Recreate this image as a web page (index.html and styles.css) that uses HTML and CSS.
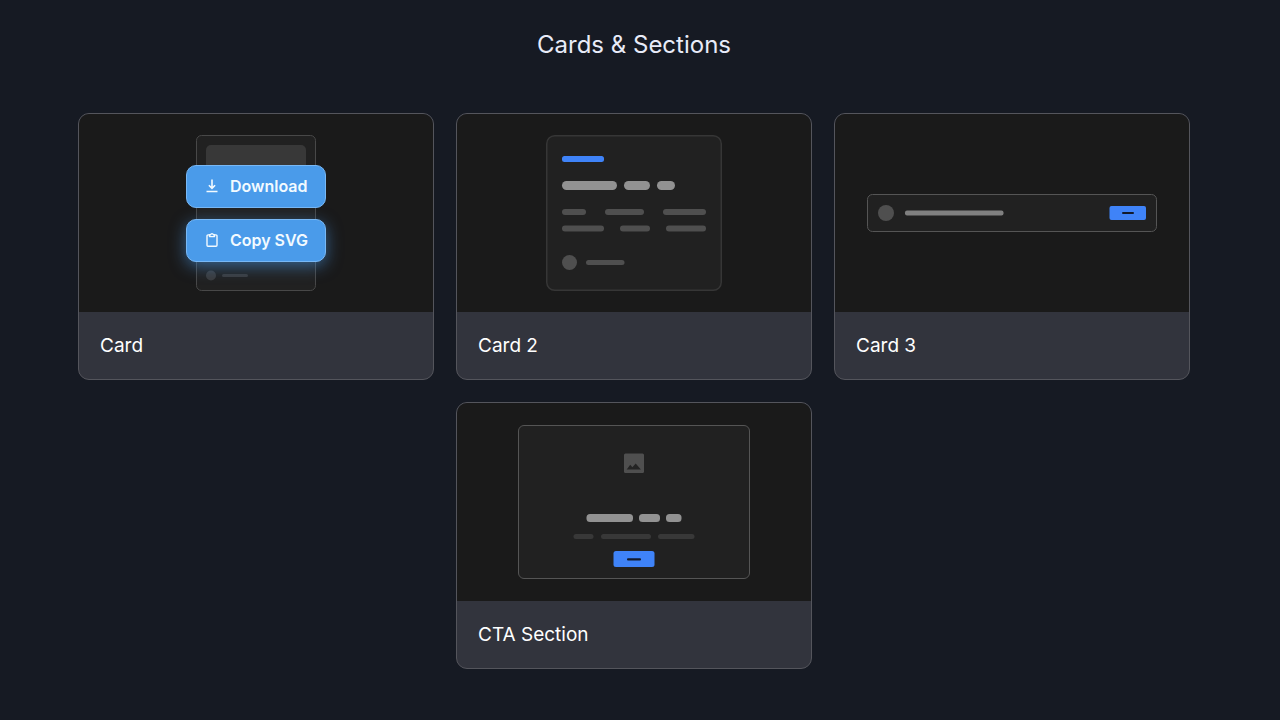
FILE: index.html
```html
<!DOCTYPE html>
<html lang="en">
<head>
<meta charset="utf-8">
<meta name="viewport" content="width=device-width, initial-scale=1">
<title>Cards &amp; Sections</title>
<link rel="stylesheet" href="styles.css">
</head>
<body>
<main class="page">
  <h1 class="heading">Cards &amp; Sections</h1>
  <div class="cards">
    <article class="card">
      <div class="preview">
        <svg class="thumb" width="120" height="156" viewBox="0 0 120 156" aria-hidden="true">
          <rect class="frame frame-light" x=".5" y=".5" width="119" height="155" rx="5"/>
          <rect class="picture" x="10" y="10" width="100" height="60" rx="5"/>
          <circle class="faint" cx="15" cy="140.5" r="5"/>
          <rect class="faint" x="26" y="139" width="26" height="3" rx="1.5"/>
        </svg>
        <div class="actions">
          <button class="action" type="button">
            <svg width="16" height="16" viewBox="0 0 16 16" fill="none" stroke="currentColor" stroke-width="1.6" aria-hidden="true"><path d="M8 1.5v8.5M4.900 7.300 8 10.400l3.100-3.100M2.500 13.500h11"/></svg>
            Download
          </button>
          <button class="action action-glow" type="button">
            <svg width="16" height="16" viewBox="0 0 16 16" fill="none" stroke="currentColor" stroke-width="1.4" stroke-linejoin="round" aria-hidden="true"><path d="M5.500 2.900H4a1 1 0 0 0-1 1v9.300a1 1 0 0 0 1 1h8a1 1 0 0 0 1-1V3.900a1 1 0 0 0-1-1h-1.500"/><path d="M5.500 4.600V2.700h1.100a1.450 1.450 0 0 1 2.800 0h1.100v1.900z"/></svg>
            Copy SVG
          </button>
        </div>
      </div>
      <h2 class="title">Card</h2>
    </article>

    <article class="card">
      <div class="preview">
        <svg class="thumb" width="176" height="156" viewBox="0 0 176 156" aria-hidden="true">
          <rect class="frame frame-dim" x=".75" y=".75" width="174.5" height="154.5" rx="8"/>
          <rect class="blue" x="16" y="21" width="42" height="6" rx="2.5"/>
          <g class="strong">
            <rect x="16" y="46" width="55" height="9" rx="4.5"/>
            <rect x="78" y="46" width="26" height="9" rx="4.5"/>
            <rect x="111" y="46" width="18" height="9" rx="4.5"/>
          </g>
          <g class="soft">
            <rect x="16" y="74" width="24" height="6" rx="3"/>
            <rect x="59" y="74" width="39" height="6" rx="3"/>
            <rect x="117" y="74" width="43" height="6" rx="3"/>
            <rect x="16" y="90.5" width="42" height="6" rx="3"/>
            <rect x="74" y="90.5" width="30" height="6" rx="3"/>
            <rect x="120" y="90.5" width="40" height="6" rx="3"/>
            <circle cx="23.5" cy="127.5" r="7.5"/>
            <rect x="40" y="125" width="38.5" height="5" rx="2.5"/>
          </g>
        </svg>
      </div>
      <h2 class="title">Card 2</h2>
    </article>

    <article class="card">
      <div class="preview">
        <svg class="thumb" width="290" height="38" viewBox="0 0 290 38" aria-hidden="true">
          <rect class="frame" x=".5" y=".5" width="289" height="37" rx="5"/>
          <circle class="soft" cx="19" cy="19" r="8"/>
          <rect class="medium" x="38" y="16.5" width="98.5" height="5" rx="2"/>
          <rect class="blue" x="242.500" y="12" width="36.500" height="14" rx="2"/>
          <rect class="dash" x="255" y="18" width="12" height="2" rx="1"/>
        </svg>
      </div>
      <h2 class="title">Card 3</h2>
    </article>

    <article class="card">
      <div class="preview">
        <svg class="thumb" width="232" height="154" viewBox="0 0 232 154" aria-hidden="true">
          <rect class="frame" x=".5" y=".5" width="231" height="153" rx="5.5"/>
          <rect class="soft" x="106" y="28.5" width="20" height="19.5" rx="1.5"/>
          <path class="cutout" d="M108.7 44.5 112.2 39.7 114.4 42.3 117.7 38.6 122.9 44.5z"/>
          <g class="strong">
            <rect x="68.5" y="89" width="46.5" height="8" rx="3.5"/>
            <rect x="121" y="89" width="21" height="8" rx="3.5"/>
            <rect x="148" y="89" width="15.5" height="8" rx="3.5"/>
          </g>
          <g class="muted">
            <rect x="55.5" y="109" width="20" height="5" rx="2.5"/>
            <rect x="83" y="109" width="50" height="5" rx="2.5"/>
            <rect x="140" y="109" width="36.5" height="5" rx="2.5"/>
          </g>
          <rect class="blue" x="95.5" y="126" width="41" height="16" rx="2.5"/>
          <rect class="dash" x="109" y="133.2" width="14" height="2.2" rx="1"/>
        </svg>
      </div>
      <h2 class="title">CTA Section</h2>
    </article>
  </div>
</main>
</body>
</html>
```
FILE: styles.css
```css
* {
  box-sizing: border-box;
}

body {
  margin: 0;
  min-height: 100vh;
  background: #161a23;
  color: #fff;
  font-family: Inter, "Liberation Sans", sans-serif;
}

.page {
  padding: 28px 90px 32px 78px;
}

.heading {
  margin: 0 0 52px;
  color: #e8ebf8;
  font-size: 24px;
  font-weight: 400;
  line-height: 33px;
  text-align: center;
}

.cards {
  display: flex;
  flex-wrap: wrap;
  justify-content: center;
  gap: 22px;
}

.card {
  flex: 0 0 calc((100% - 44px) / 3);
  overflow: hidden;
  border: 1px solid #54555c;
  border-radius: 11px;
  background: #32343d;
}

.preview {
  display: grid;
  place-items: center;
  padding: 21px 0;
  min-height: 198px;
  background: #1a1a1a;
}

.thumb {
  display: block;
  grid-area: 1 / 1;
}

.title {
  margin: 0;
  padding: 20px 21px 19px;
  font-size: 19px;
  font-weight: 400;
  line-height: 28px;
}

.actions {
  position: relative;
  display: flex;
  flex-direction: column;
  grid-area: 1 / 1;
  gap: 11px;
}

.action {
  display: flex;
  align-items: center;
  gap: 10px;
  height: 43px;
  padding: 0 17px;
  border: 1px solid #78b8f5;
  border-radius: 10px;
  background: #4a9bea;
  color: #f2faff;
  font: 600 16px/24px Inter, "Liberation Sans", sans-serif;
  cursor: pointer;
}

.action-glow {
  box-shadow: 0 4px 16px rgba(74, 155, 234, 0.55);
}

.frame { fill: #212121; stroke: #555; }
.frame-light { stroke: #484848; }
.frame-dim { stroke: #363636; stroke-width: 1.5; }
.picture { fill: #383838; }
.faint { fill: #3a3b3d; }
.blue { fill: #3f83f8; }
.strong { fill: #929292; }
.medium { fill: #808080; }
.soft { fill: #4f4f4f; }
.muted { fill: #383838; }
.dash { fill: #121a2c; }
.cutout { fill: #242424; }
```
